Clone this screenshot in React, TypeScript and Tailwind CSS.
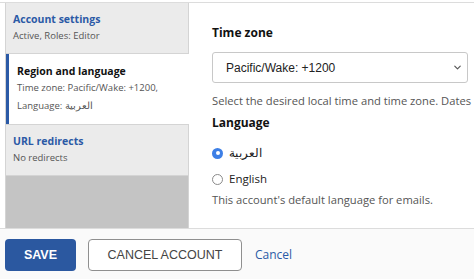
import { ChevronDown } from "lucide-react";

function SideCard({
  title,
  lines,
  active,
}: {
  title: string;
  lines: string[];
  active?: boolean;
}) {
  if (active) {
    return (
      <div className="relative -mr-px flex flex-col border-b border-[#d4d4d4] bg-white pb-[9px] pl-[11px] pr-2 pt-[9px]">
        <div className="absolute bottom-0 left-0 top-0 w-[3px] bg-[#2b5aa6]" />
        <p className="text-[10.5px] font-bold leading-[16px] text-[#111]">{title}</p>
        {lines.map((l) => (
          <p key={l} className="text-[9.5px] leading-[18px] text-[#555]">
            {l}
          </p>
        ))}
      </div>
    );
  }
  return (
    <div className="flex flex-col border-b border-[#d4d4d4] bg-[#ebebeb] pb-[8px] pl-[7px] pr-2 pt-[8px]">
      <p className="text-[10.5px] font-bold leading-[16px] text-[#2b5aa6]">{title}</p>
      {lines.map((l) => (
        <p key={l} className="text-[9.5px] leading-[18px] text-[#555]">
          {l}
        </p>
      ))}
    </div>
  );
}

function Radio({ checked, label }: { checked?: boolean; label: string }) {
  return (
    <label className="flex h-[18px] items-center gap-[6px]">
      {checked ? (
        <span className="flex h-[11px] w-[11px] items-center justify-center rounded-full bg-[#3d7fe6]">
          <span className="h-[4px] w-[4px] rounded-full bg-white" />
        </span>
      ) : (
        <span className="h-[11px] w-[11px] rounded-full border border-[#8a8a8a] bg-white" />
      )}
      <span className="text-[11.5px] text-[#222]">{label}</span>
    </label>
  );
}

export default function App() {
  return (
    <div className="flex h-[279px] w-[474px] flex-col overflow-hidden bg-white font-['Open_Sans',sans-serif]">
      <div className="mt-[2px] flex h-[227px] border-b border-t border-[#dcdcdc] pl-[5px]">
        <div className="flex w-[184px] shrink-0 flex-col border-l border-r border-[#d4d4d4] bg-[#c4c4c4]">
          <SideCard title="Account settings" lines={["Active, Roles: Editor"]} />
          <SideCard
            active
            title="Region and language"
            lines={["Time zone: Pacific/Wake: +1200,", "Language: العربية"]}
          />
          <SideCard title="URL redirects" lines={["No redirects"]} />
        </div>
        <div className="min-w-0 flex-1 overflow-hidden whitespace-nowrap bg-white pl-[23px] pr-[6px] pt-[21px]">
          <h2 className="text-[12px] font-bold leading-[18px] text-[#111]">Time zone</h2>
          <div className="mt-[10px] flex h-[31px] items-center justify-between rounded-[3px] border border-[#c8c8c8] bg-white pl-[13px] pr-[4px] font-['Liberation_Sans',sans-serif] text-[12px] text-[#222]">
            <span>Pacific/Wake: +1200</span>
            <ChevronDown size={11} strokeWidth={2.5} className="text-[#555]" />
          </div>
          <p className="mt-[10px] text-[11.2px] leading-[16px] text-[#555]">
            Select the desired local time and time zone. Dates
          </p>
          <h2 className="mt-[5px] text-[12px] font-bold leading-[18px] text-[#111]">Language</h2>
          <div className="mt-[12px] flex flex-col gap-[8px]">
            <Radio checked label="العربية" />
            <Radio label="English" />
          </div>
          <p className="mt-[4px] text-[11.2px] leading-[16px] text-[#555]">
            This account's default language for emails.
          </p>
        </div>
      </div>
      <div className="flex flex-1 items-center gap-[12px] bg-[#fafafa] pl-[5px] pt-[2px] font-['Liberation_Sans',sans-serif]">
        <button className="h-[32px] w-[71px] rounded-[4px] bg-[#2b58a0] text-[12.5px] font-semibold text-white">
          SAVE
        </button>
        <button className="h-[32px] w-[154px] rounded-[4px] border border-[#8f8f8f] bg-white text-[12.5px] text-[#444]">
          CANCEL ACCOUNT
        </button>
        <a className="ml-[1px] font-['Open_Sans',sans-serif] text-[12px] text-[#2b5aa6]">Cancel</a>
      </div>
    </div>
  );
}
